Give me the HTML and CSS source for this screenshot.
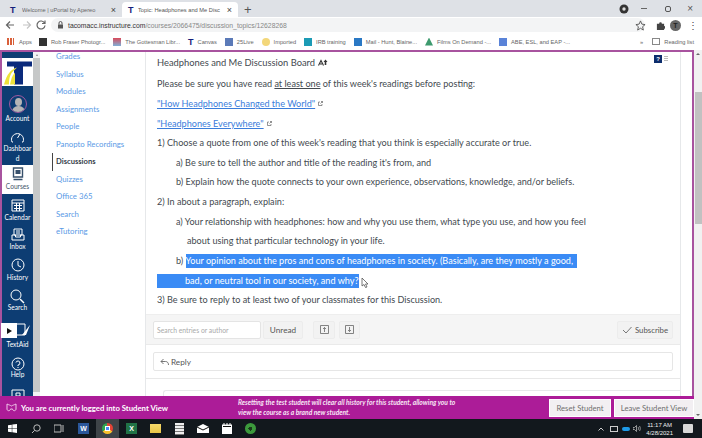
FILE: index.html
```html
<!DOCTYPE html>
<html lang="en">
<head>
<meta charset="utf-8">
<title>Topic: Headphones and Me Discussion Board</title>
<link rel="stylesheet" href="styles.css">
</head>
<body>
<div class="screen">
  <header class="tabs">
    <div class="tab tab-off">
      <span class="fav-t">T</span><span class="tab-title">Welcome | uPortal by Apereo</span><span class="tab-x">×</span>
    </div>
    <div class="tab tab-on">
      <span class="fav-t">T</span><span class="tab-title">Topic: Headphones and Me Disc</span><span class="tab-x">×</span>
    </div>
    <span class="tab-plus">+</span>
    <div class="win-ctrl">
      <svg class="rec" width="10" height="10" viewBox="0 0 10 10"><circle cx="5" cy="5" r="4.500" fill="#333"/><circle cx="5" cy="5" r="1.700" fill="#ddd"/></svg>
      <span class="win-min"></span>
      <span class="win-max"></span>
      <span class="win-close">×</span>
    </div>
  </header>

  <div class="toolbar">
    <svg class="t-back" width="12" height="12" viewBox="0 0 12 12"><path d="M10 6H2.500M6 2.500 2.500 6 6 9.500" fill="none" stroke="#666" stroke-width="1.200"/></svg>
    <svg class="t-fwd" width="12" height="12" viewBox="0 0 12 12"><path d="M2 6h7.500M6 2.500 9.500 6 6 9.500" fill="none" stroke="#c4c4c4" stroke-width="1.200"/></svg>
    <svg class="t-reload" width="12" height="12" viewBox="0 0 12 12"><path d="M9.500 4A4 4 0 1 0 10 6.500M10 1.500V4.500H7" fill="none" stroke="#666" stroke-width="1.200"/></svg>
    <div class="omnibox">
      <svg width="7" height="8" viewBox="0 0 7 8"><rect x="1" y="3.500" width="5" height="4" fill="#555"/><path d="M2 3.500V2a1.500 1.500 0 0 1 3 0v1.500" fill="none" stroke="#555"/></svg>
      <span class="url"><b>tacomacc.instructure.com</b>/courses/2066475/discussion_topics/12628268</span>
    </div>
    <svg class="tool-star" width="11" height="11" viewBox="0 0 12 12"><path d="M6 1 7.500 4.500 11 5 8.300 7.300 9.100 11 6 9 2.900 11 3.700 7.300 1 5 4.500 4.500Z" fill="none" stroke="#555"/></svg>
    <svg class="tool-puzzle" width="9" height="9" viewBox="0 0 10 10"><path d="M1 3h2.500a1.500 1.500 0 0 1 3 0H9v2.500a1.500 1.500 0 0 1 0 3V10H1Z" fill="#444"/></svg>
    <span class="avatar">T</span>
    <span class="kebab">⋮</span>
  </div>

  <nav class="bookmarks">
    <span class="bm bm-first"><span class="bm-apps"></span>Apps</span>
    <span class="bm"><span class="bm-ico bm-dark"></span>Rob Fraser Photogr...</span>
    <span class="bm"><span class="bm-ico bm-stripe"></span>The Gottesman Libr...</span>
    <span class="bm"><span class="bm-t">T</span>Canvas</span>
    <span class="bm"><span class="bm-ico bm-blue"></span>25Live</span>
    <span class="bm"><span class="bm-ico bm-folder"></span>Imported</span>
    <span class="bm"><span class="bm-ico bm-teal"></span>IRB training</span>
    <span class="bm"><span class="bm-ico bm-mail"></span>Mail - Hunt, Blaine...</span>
    <span class="bm"><span class="bm-ico bm-film"></span>Films On Demand -...</span>
    <span class="bm"><span class="bm-ico bm-doc"></span>ABE, ESL, and EAP -...</span>
    <span class="bm-right"><span class="bm-more">»</span><span class="bm-list"></span>Reading list</span>
  </nav>

  <div class="viewport">
    <div class="page-col">
      <div class="frame">
        <aside class="gnav">
          <div class="logo">
            <svg width="30" height="27" viewBox="0 0 30 26">
              <path d="M4 2H29V7H20V25H11V7H4Z" fill="#0b2a7c"/>
              <path d="M1 25C4 14 8 10 14 8L11 11C7 14 6 19 6 25ZM7 25C8 20 9 16 12 13V25Z" fill="#eee23a"/>
            </svg>
          </div>
          <a class="gitem g-account">
            <span class="avatar-big"><span class="head"></span><span class="torso"></span></span>
            <span>Account</span>
          </a>
          <a class="gitem g-dash">
            <svg width="15" height="12" viewBox="0 0 15 12"><path d="M3 11H2A6 6 0 1 1 13 11H12M7.500 7 10 3" fill="none" stroke="#fff"/></svg>
            <span>Dashboar<br>d</span>
          </a>
          <a class="gitem g-courses">
            <svg width="12" height="14" viewBox="0 0 12 14"><path d="M1.500 1H10.500V10H1.500ZM1.500 12.500H10.500" fill="none" stroke="#37506b" stroke-width="1.400"/><path d="M3.500 3H8.500V7H3.500Z" fill="#37506b"/></svg>
            <span>Courses</span>
          </a>
          <a class="gitem g-cal">
            <svg width="14" height="14" viewBox="0 0 14 14"><path d="M1 2H13V13H1ZM1 5H13M3 7.500H11M3 10.500H11M5.500 5V13M8.500 5V13" fill="none" stroke="#fff"/></svg>
            <span>Calendar</span>
          </a>
          <a class="gitem g-inbox">
            <svg width="14" height="13" viewBox="0 0 14 13"><path d="M3 1H11V7H3ZM1 7H4.500V9H9.500V7H13V12H1ZM5 3H9M5 5H9" fill="none" stroke="#fff"/></svg>
            <span>Inbox</span>
          </a>
          <a class="gitem g-hist">
            <svg width="14" height="14" viewBox="0 0 14 14"><circle cx="7" cy="7" r="6" fill="none" stroke="#fff"/><path d="M7 3V7.500L10 9" fill="none" stroke="#fff"/></svg>
            <span>History</span>
          </a>
          <a class="gitem g-search">
            <svg width="15" height="15" viewBox="0 0 15 15"><circle cx="6" cy="6" r="5" fill="none" stroke="#fff"/><path d="M10 10 14 14" stroke="#fff" stroke-width="1.500"/></svg>
            <span>Search</span>
          </a>
          <a class="gitem g-text">
            <svg width="26" height="14" viewBox="0 0 26 14"><path d="M2 1H20V12H2" fill="none" stroke="#fff"/><path d="M17 12 25 2 21 12Z" fill="#fff"/></svg>
            <span>TextAid</span>
          </a>
          <a class="gitem g-help">
            <svg width="14" height="14" viewBox="0 0 14 14"><circle cx="7" cy="7" r="6" fill="none" stroke="#fff"/><path d="M5 5.500A2 2 0 1 1 7 8V9M7 10V11" fill="none" stroke="#fff"/></svg>
            <span>Help</span>
          </a>
          <a class="gitem g-last">
            <svg width="14" height="10" viewBox="0 0 14 10"><path d="M1 1H13V10M1 1V10M5 4H9V7H5Z" fill="none" stroke="#fff"/></svg>
          </a>
        </aside>
        <div class="play"><span class="play-tri"></span></div>

        <div class="nav-scroll"><span class="nav-arrow"></span><span class="nav-thumb"></span></div>

        <nav class="course-nav">
          <a class="cn">Grades</a>
          <a class="cn">Syllabus</a>
          <a class="cn">Modules</a>
          <a class="cn">Assignments</a>
          <a class="cn">People</a>
          <a class="cn">Panopto Recordings</a>
          <a class="cn cn-active">Discussions</a>
          <a class="cn">Quizzes</a>
          <a class="cn">Office 365</a>
          <a class="cn">Search</a>
          <a class="cn">eTutoring</a>
        </nav>

        <main class="content">
          <div class="article">
            <div class="title-row">
              <h1 class="title">Headphones and Me Discussion Board</h1>
              <svg class="title-ico" width="10" height="7" viewBox="0 0 10 7"><path d="M.5 6.500 3 1.500 5.500 6.500M2 5H4" fill="none" stroke="#333" stroke-width="1.100"/><path d="M7.500 .5 9.500 3H8.300V6H6.700V3H5.500Z" fill="#333"/></svg>
              <span class="badge-wrap"><span class="badge">?</span><span class="badge-dots"></span></span>
            </div>
            <p>Please be sure you have read <u>at least one</u> of this week's readings before posting:</p>
            <p><a class="ext">"How Headphones Changed the World"</a><svg class="ext-ico" width="5" height="5" viewBox="0 0 5 5"><path d="M2 1H.5V4.500H4V3M2.500 2.500 4.500.5M3 .5H4.500V2" fill="none" stroke="#666" stroke-width=".7"/></svg></p>
            <p><a class="ext">"Headphones Everywhere"</a><svg class="ext-ico" width="5" height="5" viewBox="0 0 5 5"><path d="M2 1H.5V4.500H4V3M2.500 2.500 4.500.5M3 .5H4.500V2" fill="none" stroke="#666" stroke-width=".7"/></svg></p>
            <p>1) Choose a quote from one of this week's reading that you think is especially accurate or true.</p>
            <p class="in1">a) Be sure to tell the author and title of the reading it's from, and</p>
            <p class="in1">b) Explain how the quote connects to your own experience, observations, knowledge, and/or beliefs.</p>
            <p>2) In about a paragraph, explain:</p>
            <p class="in1">a) Your relationship with headphones: how and why you use them, what type you use, and how you feel</p>
            <p class="in2">about using that particular technology in your life.</p>
            <p class="in1">b) <span class="sel sel-a">Your opinion about the pros and cons of headphones in society. (Basically, are they mostly a good,</span></p>
            <p><span class="sel sel-b">bad, or neutral tool in our society, and why?</span><svg class="cursor" width="8" height="11" viewBox="0 0 8 11"><path d="M1 1V9L3 7.500 4.500 10.500 6 10 4.500 7H7Z" fill="#fff" stroke="#555" stroke-width=".8"/></svg></p>
            <p>3) Be sure to reply to at least two of your classmates for this Discussion.</p>
          </div>

          <div class="filter-bar">
            <span class="search-box">Search entries or author</span>
            <span class="btn btn-unread">Unread</span>
            <span class="btn btn-ico"><svg width="9" height="9" viewBox="0 0 9 9"><path d="M.5.500H8.500V8.500H.5ZM4.500 7V2.500M3 4 4.500 2.500 6 4" fill="none" stroke="#666" stroke-width=".8"/></svg></span>
            <span class="btn btn-ico"><svg width="9" height="9" viewBox="0 0 9 9"><path d="M.5.500H8.500V8.500H.5ZM4.500 2V6.500M3 5 4.500 6.500 6 5" fill="none" stroke="#666" stroke-width=".8"/></svg></span>
            <span class="btn btn-sub"><svg width="10" height="8" viewBox="0 0 10 8"><path d="M1 4 4 7 9.500 1" fill="none" stroke="#777"/></svg>Subscribe</span>
          </div>

          <div class="reply-wrap">
            <div class="reply"><svg width="9" height="8" viewBox="0 0 9 8"><path d="M3.500 1 1 3.500 3.500 6M1 3.500H5.500C7.500 3.500 8.500 5 8.500 7" fill="none" stroke="#666" stroke-width=".9"/></svg>Reply</div>
          </div>
          <div class="entry-stub"></div>
        </main>
      </div>

      <div class="student-bar">
        <svg class="mask" width="11" height="9" viewBox="0 0 11 9"><path d="M1 1C3 2 4 2 5.500 3 7 2 8 2 10 1V6C10 8 7 8.500 6.500 6H4.500C4 8.500 1 8 1 6Z" fill="none" stroke="#f0c8ea"/></svg>
        <strong class="student-msg">You are currently logged into Student View</strong>
        <em class="student-note">Resetting the test student will clear all history for this student, allowing you to<br>view the course as a brand new student.</em>
        <span class="student-btn btn-reset">Reset Student</span>
        <span class="student-btn btn-leave">Leave Student View</span>
      </div>
    </div>

    <div class="page-scroll"><span class="ps-arrow"></span><span class="ps-thumb"></span><span class="ps-arrow-down"></span></div>
  </div>

  <footer class="taskbar">
    <svg class="tb-win" width="9" height="9" viewBox="0 0 9 9"><path d="M0 1.200 3.800.7V4.200H0ZM4.300.6 9 0V4.200H4.300ZM0 4.700H3.800V8.200L0 7.700ZM4.300 4.700H9V9L4.300 8.300Z" fill="#fff"/></svg>
    <svg class="tb-search" width="10" height="10" viewBox="0 0 10 10"><circle cx="6" cy="4" r="3.200" fill="none" stroke="#bbb"/><path d="M3.600 6.400 1 9" stroke="#bbb"/></svg>
    <svg class="tb-view" width="10" height="9" viewBox="0 0 10 9"><path d="M0 1H7V8H0ZM9 1V8" fill="none" stroke="#bbb"/></svg>
    <span class="tb-app tb-word">W</span>
    <span class="tb-chrome"><span class="chrome-logo"></span></span>
    <span class="tb-app tb-excel">X</span>
    <span class="tb-folder"></span>
    <span class="tb-calc"></span>
    <svg class="tb-mail" width="12" height="9" viewBox="0 0 12 9"><path d="M0 3 6 0 12 3V9H0Z" fill="#fff"/><path d="M0 3 6 6 12 3" fill="none" stroke="#111"/></svg>
    <svg class="tb-calendar" width="10" height="11" viewBox="0 0 10 11"><path d="M0 1.500H10V11H0Z" fill="#fff"/><path d="M1 3.500H9" stroke="#111"/><path d="M2 0V2M8 0V2M5 0V2" stroke="#fff"/></svg>
    <span class="tb-green"></span>
    <div class="tray">
      <svg class="tray-up" width="6" height="4" viewBox="0 0 6 4"><path d="M.5 3.500 3 1 5.500 3.500" fill="none" stroke="#ccc"/></svg>
      <span class="tray-net"></span>
      <span class="tray-cloud"></span>
      <svg class="tray-vol" width="8" height="7" viewBox="0 0 8 7"><path d="M0 2.500H1.500L3.500.5V6.500L1.500 4.500H0ZM5 2C5.700 3 5.700 4 5 5M6.500 1C7.500 2.500 7.500 4.500 6.500 6" fill="none" stroke="#ccc" stroke-width=".7"/></svg>
      <span class="clock">11:17 AM<br>4/28/2021</span>
      <span class="tray-note"></span>
    </div>
  </footer>
</div>
</body>
</html>
```
FILE: styles.css
```css
* { box-sizing: border-box; }
html, body { margin: 0; padding: 0; }
body { width: 702px; height: 438px; overflow: hidden; font-family: "Lato", "Open Sans", sans-serif; background: #fff; }
a { display: block; }
.screen { width: 702px; height: 438px; display: flex; flex-direction: column; overflow: hidden; }

/* browser tabs */
.tabs { height: 17px; background: #dee1e6; display: flex; align-items: flex-end; font-family: "Liberation Sans", sans-serif; font-size: 5.700px; color: #666; flex: none; }
.tab { height: 15px; display: flex; align-items: center; }
.tab-off { width: 122px; padding: 0 6px 0 10px; }
.tab-on { width: 116px; padding: 0 6px 0 6px; background: #fff; border-radius: 4px 4px 0 0; color: #555; }
.fav-t { width: 9px; font: 700 9px "Liberation Sans", sans-serif; color: #15207a; margin-right: 3px; flex: none; }
.tab-on .fav-t { margin-right: 1px; }
.tab-title { flex: 1; min-width: 0; white-space: nowrap; overflow: hidden; }
.tab-x { font-size: 9px; color: #444; flex: none; margin-left: 2px; }
.tab-plus { margin-left: 6px; font-size: 13px; line-height: 15px; color: #555; }
.win-ctrl { margin-left: auto; height: 17px; display: flex; align-items: center; padding-right: 9px; font-size: 10px; color: #555; }
.rec { margin-right: 12px; }
.win-min { width: 6px; height: 1px; background: #666; margin-right: 18px; }
.win-max { width: 6px; height: 6px; border: 1px solid #555; border-radius: 2px; margin-right: 16px; }

/* address bar */
.toolbar { height: 16px; background: #fff; display: flex; align-items: center; padding-left: 4px; flex: none; }
.t-fwd { margin-left: 5px; }
.t-reload { margin-left: 2px; }
.omnibox { margin-left: 4px; width: 594px; height: 14px; background: #f3f4f5; border-radius: 7px; display: flex; align-items: center; padding-left: 6px; gap: 4px; font: 6.800px "Liberation Sans", sans-serif; color: #888; flex: none; }
.url { white-space: nowrap; }
.url b { font-weight: 400; color: #333; }
.tool-star { margin-left: -10px; flex: none; }
.tool-puzzle { margin-left: 10px; flex: none; }
.avatar { width: 11px; height: 11px; border-radius: 50%; background: #666; color: #222; font: 700 7px/11px "Liberation Sans", sans-serif; text-align: center; margin-left: 5px; flex: none; }
.kebab { font-size: 10px; color: #444; margin-left: 7px; }

/* bookmarks */
.bookmarks { height: 17px; background: #fff; display: flex; align-items: center; padding: 0 8px 0 7px; font: 5.700px "Liberation Sans", sans-serif; color: #666; flex: none; }
.bm { display: flex; align-items: center; white-space: nowrap; margin-right: 8px; }
.bm-first { margin-right: 7px; }
.bm-apps { width: 7px; height: 7px; margin-right: 5px; background: repeating-linear-gradient(90deg, #d9603a 0 2px, #fff 2px 3px); }
.bm-ico { width: 8px; height: 8px; margin-right: 4px; }
.bm-dark { background: #333; }
.bm-stripe { background: linear-gradient(#d94a5a, #7fb0d8); }
.bm-blue { background: #5b7ab8; }
.bm-folder { background: #f3d77a; border-radius: 50%; }
.bm-teal { background: #1c9bb5; }
.bm-mail { background: #2a78c4; }
.bm-film { background: #3d9a6e; clip-path: polygon(50% 0, 100% 100%, 0 100%); }
.bm-doc { background: #5a83d8; }
.bm-t { font: 700 9px "Liberation Sans", sans-serif; color: #15207a; margin-right: 4px; }
.bm-right { margin-left: auto; display: flex; align-items: center; white-space: nowrap; }
.bm-more { margin-right: 9px; }
.bm-list { width: 8px; height: 7px; border: 1px solid #888; margin-right: 4px; }

/* page */
.viewport { height: 369px; display: flex; flex: none; position: relative; }
.page-col { width: 694px; flex: none; display: flex; flex-direction: column; }
.frame { width: 694px; height: 346px; display: flex; border: 2px solid #a8539f; border-bottom: 0; flex: none; overflow: hidden; }
.gnav { width: 31px; flex: none; height: 344px; background: #0d3d73; padding-top: 6px; color: #fff; font-size: 6.600px; text-align: center; display: flex; flex-direction: column; overflow: hidden; }
.logo { height: 28px; background: #fff; flex: none; display: flex; align-items: center; justify-content: center; }
.gitem { flex: none; display: flex; flex-direction: column; align-items: center; line-height: 10px; }
.gitem svg { flex: none; }
.g-account { height: 37px; padding-top: 9px; }
.avatar-big { width: 18px; height: 18px; border-radius: 50%; border: 1px solid #a05aa0; background: #0d3d73; position: relative; overflow: hidden; flex: none; display: block; }
.head { position: absolute; left: 5px; top: 2px; width: 7px; height: 8px; border-radius: 50%; background: #b5b5b5; }
.torso { position: absolute; left: 2px; top: 10px; width: 13px; height: 7px; border-radius: 6px 6px 0 0; background: #b5b5b5; }
.g-dash { height: 42px; padding-top: 8px; }
.g-courses { height: 29px; background: #fff; color: #45566a; padding-top: 2px; }
.g-cal { height: 30px; padding-top: 4px; }
.g-inbox { height: 32px; padding-top: 4px; }
.g-hist { height: 32px; padding-top: 2px; }
.g-search { height: 32px; padding-top: 1px; }
.g-search span { margin-top: -2px; }
.g-text { height: 34px; padding-top: 3px; }
.g-text span { margin-top: 2px; }
.g-help { height: 30px; padding-top: 3px; }
.g-help span { margin-top: -2px; }
.g-last { height: 12px; padding-top: 5px; }
.play { position: absolute; left: 1px; top: 273px; width: 16px; height: 15px; background: #fff; display: flex; align-items: center; justify-content: center; }
.play-tri { width: 0; height: 0; border-left: 5px solid #111; border-top: 3px solid transparent; border-bottom: 3px solid transparent; }

.nav-scroll { width: 7px; flex: none; background: #f3f3f3; display: flex; flex-direction: column; align-items: center; }
.nav-arrow { width: 0; height: 0; margin: 2px 0 3px; border-left: 1.500px solid transparent; border-right: 1.500px solid transparent; border-bottom: 2px solid #888; flex: none; }
.nav-thumb { width: 7px; height: 334px; margin-top: -1px; background: #c6c8c8; flex: none; }

.course-nav { width: 106px; flex: none; padding-left: 16px; border-right: 1px solid #e6e8ea; margin-top: -4px; font-size: 7.800px; color: #5a9ae6; }
.cn { height: 17.560px; line-height: 17.560px; white-space: nowrap; }
.cn-active { color: #35404a; font-weight: 700; font-size: 7.600px; position: relative; }
.cn-active::before { content: ""; position: absolute; left: -4px; top: 0; width: 1px; height: 18px; background: #444; }

.content { flex: none; width: 535px; border-right: 1px solid #e6e8ea; font-size: 9.100px; color: #444a50; display: flex; flex-direction: column; }
.article { height: 262px; padding: 0 10px 0 11px; flex: none; }
.title-row { height: 22px; display: flex; align-items: center; padding-bottom: 2px; }
.title { font-size: 9.350px; font-weight: 400; margin: 0; }
.title-ico { margin-left: 3px; }
.badge-wrap { margin-left: auto; display: flex; align-items: center; margin-top: -6px; padding-right: 2px; gap: 2px; }
.badge { width: 8px; height: 8px; background: #0d2d6c; color: #fff; font: 700 6px/8px "Liberation Sans", sans-serif; text-align: center; }
.badge-dots { width: 4px; height: 6px; background: repeating-linear-gradient(#bbb 0 1px, #fff 1px 2px); }
p { margin: 0; height: 19.600px; line-height: 19.600px; white-space: nowrap; }
.article > p:first-of-type { height: 20px; }
.ext { display: inline; color: #3b7ddb; text-decoration: underline; }
.ext-ico { margin-left: 3px; vertical-align: 1px; }
.in1 { padding-left: 19px; }
.in2 { padding-left: 30px; }
.sel { background: #3a8bf5; color: #fff; display: inline-block; height: 14px; line-height: 14px; vertical-align: middle; }
.sel-a { padding-right: 4px; }
.sel-b { padding-left: 28px; }
.cursor { margin-left: 2px; vertical-align: -5px; }

.filter-bar { height: 31px; background: #f5f5f5; border-top: 1px solid #eeeeee; border-bottom: 1px solid #eaeaea; display: flex; align-items: center; padding: 0 7px; flex: none; font-size: 8.200px; color: #555; }
.search-box { width: 108px; height: 18px; background: #fff; border: 1px solid #e4e4e4; border-radius: 2px; font-size: 6.800px; line-height: 16px; padding-left: 3px; color: #aaa; white-space: nowrap; }
.btn { height: 18px; background: #f2f2f2; border: 1px solid #ececec; border-radius: 2px; display: flex; align-items: center; justify-content: center; }
.btn-unread { width: 40px; margin-left: 2px; }
.btn-ico { width: 22px; margin-left: 10px; }
.btn-ico + .btn-ico { width: 21px; margin-left: 4px; }
.btn-sub { width: 56px; margin-left: auto; gap: 3px; font-size: 7.800px; }
.reply-wrap { height: 34px; padding: 7px 7px 0; border-bottom: 1px solid #e8e8e8; flex: none; }
.reply { height: 19px; border: 1px solid #e6e6e6; border-radius: 2px; display: flex; align-items: center; padding-left: 6px; gap: 2px; font-size: 8.200px; color: #555; }
.entry-stub { margin: 11px 0 0 17px; flex: 1; border: 1px solid #e6e8ea; border-bottom: 0; border-right: 0; border-radius: 3px 0 0 0; }

.page-scroll { width: 8px; flex: none; background: #f1f1f1; display: flex; flex-direction: column; align-items: flex-end; }
.ps-arrow { width: 0; height: 0; margin: 3px 2px 0 0; border-left: 2px solid transparent; border-right: 2px solid transparent; border-bottom: 2.500px solid #666; flex: none; }
.ps-thumb { width: 7px; height: 132px; margin-top: 37px; background: #c1c1c1; flex: none; }
.ps-arrow-down { width: 0; height: 0; margin: auto 2px 3px 0; border-left: 2px solid transparent; border-right: 2px solid transparent; border-top: 2.500px solid #666; flex: none; }

/* student view */
.student-bar { height: 23px; background: #ac1c98; color: #fff; display: flex; align-items: center; flex: none; padding-left: 6px; }
.mask { flex: none; }
.student-msg { margin-left: 4px; font-size: 7.750px; font-weight: 700; white-space: nowrap; width: 217px; flex: none; }
.student-note { font-size: 6.700px; font-weight: 700; line-height: 9.500px; white-space: nowrap; color: #f7e6f5; width: 311px; flex: none; }
.student-btn { height: 18px; background: #f2eff2; border: 1px solid #fff; color: #707070; font-size: 7.700px; display: flex; align-items: center; justify-content: center; white-space: nowrap; flex: none; }
.btn-reset { width: 62px; margin-right: 3px; }
.btn-leave { width: 80px; }

/* task bar */
.taskbar { height: 19px; background: #12181d; display: flex; align-items: center; flex: none; padding-left: 8px; }
.tb-search { margin-left: 14px; }
.tb-view { margin-left: 13px; }
.tb-app { width: 11px; height: 11px; font: 700 7px/11px "Liberation Sans", sans-serif; color: #fff; text-align: center; flex: none; }
.tb-word { margin-left: 14px; background: #2b579a; }
.tb-chrome { margin-left: 7px; width: 23px; height: 19px; background: #3e4448; display: flex; align-items: center; justify-content: center; }
.chrome-logo { width: 11px; height: 11px; border-radius: 50%; background: radial-gradient(circle, #4a8af4 0 2px, #fff 2px 3px, transparent 3px), conic-gradient(#e34335 0 120deg, #f8c12c 120deg 240deg, #2fa44f 240deg 360deg); }
.tb-excel { margin-left: 7px; background: #217346; }
.tb-folder { margin-left: 13px; width: 11px; height: 9px; background: linear-gradient(#f6d96a, #e8c648); }
.tb-calc { margin-left: 14px; width: 9px; height: 12px; background: repeating-linear-gradient(#eee 0 2px, #777 2px 3px); }
.tb-mail { margin-left: 13px; }
.tb-calendar { margin-left: 13px; }
.tb-green { margin-left: 13px; width: 11px; height: 11px; border-radius: 50%; background: radial-gradient(circle, #1a3a1a 0 2px, #3c9a3c 2px 5.500px); }
.tray { margin-left: auto; height: 19px; display: flex; align-items: center; color: #eee; font: 6px/8px "Liberation Sans", sans-serif; padding-right: 9px; }
.tray-up { margin-right: 6px; }
.tray-net { width: 8px; height: 6px; border: 1px solid #ccc; margin-right: 4px; }
.tray-cloud { width: 8px; height: 4px; border-radius: 2px; background: #1e9be8; margin-right: 3px; }
.tray-vol { margin-right: 5px; }
.clock { text-align: center; white-space: nowrap; margin-right: 10px; }
.tray-note { width: 10px; height: 9px; background: #d8d8d8; border-radius: 1px; }
```
